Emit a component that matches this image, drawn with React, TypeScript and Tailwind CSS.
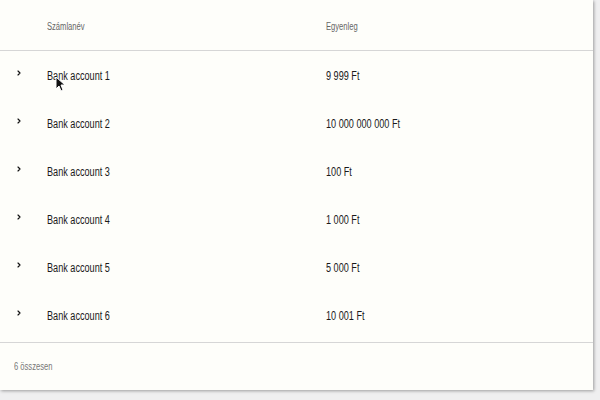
import { ChevronRight } from "lucide-react";

const accounts = [
  { name: "Bank account 1", balance: "9 999 Ft" },
  { name: "Bank account 2", balance: "10 000 000 000 Ft" },
  { name: "Bank account 3", balance: "100 Ft" },
  { name: "Bank account 4", balance: "1 000 Ft" },
  { name: "Bank account 5", balance: "5 000 Ft" },
  { name: "Bank account 6", balance: "10 001 Ft" },
];

// the capture is horizontally squeezed, so text gets a narrow look
const squeeze = "inline-block whitespace-nowrap origin-left scale-x-[0.76]";

export default function App() {
  return (
    <div
      className="w-[600px] h-[400px] bg-[#efeff0] overflow-hidden"
      style={{ fontFamily: '"Liberation Sans", Arial, sans-serif' }}
    >
      <div className="relative w-[593px] h-[390px] bg-[#fefefa] shadow-[1px_1px_3px_rgba(0,0,0,0.35)] flex flex-col">
        {/* header */}
        <div className="flex items-center h-[51px] pt-[3px] border-b border-[#d6d6d6] text-[10px] text-[#666]">
          <div className="w-[47px]" />
          <div className="w-[279px]">
            <span className={squeeze}>Számlanév</span>
          </div>
          <div>
            <span className={squeeze}>Egyenleg</span>
          </div>
        </div>

        <div className="flex flex-col pt-[1px]">
          {accounts.map((a) => (
            <div key={a.name} className="flex items-center h-[48px] text-[12px] text-[#1a1a1a]">
              <div className="w-[47px] pl-[15px] flex items-center">
                <ChevronRight className="w-[8px] h-[8px] -mt-[6px] text-[#111]" strokeWidth={3.5} />
              </div>
              <div className="w-[279px]">
                <span className={squeeze}>{a.name}</span>
              </div>
              <div>
                <span className={squeeze}>{a.balance}</span>
              </div>
            </div>
          ))}
        </div>

        <div className="mt-[2px] border-t border-[#d6d6d6] flex-1 flex items-center pl-[14px] text-[10px] text-[#777]">
          <span className={squeeze}>6 összesen</span>
        </div>

        {/* mouse cursor */}
        <svg className="absolute left-[55px] top-[76px]" width="10" height="16" viewBox="0 0 10 16">
          <path d="M1 1 L1 13 L4 10 L6 15 L8 14 L6 9 L10 9 Z" fill="#111" stroke="#fff" strokeWidth="1" />
        </svg>
      </div>
    </div>
  );
}
